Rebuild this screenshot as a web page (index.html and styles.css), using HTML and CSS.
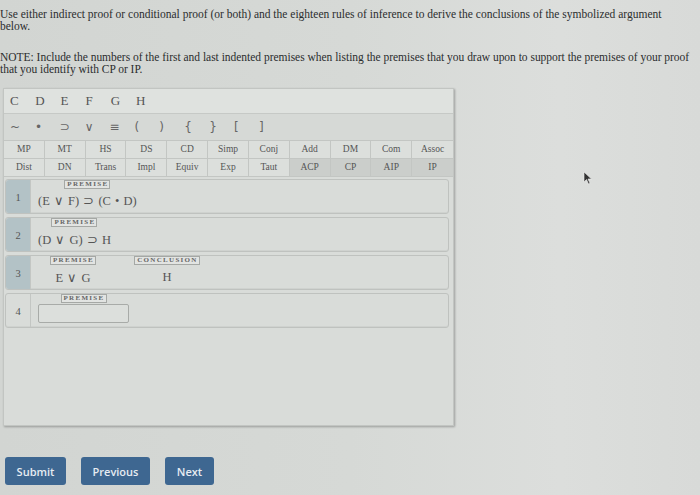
FILE: index.html
```html
<!DOCTYPE html>
<html>
<head>
<meta charset="utf-8">
<link rel="stylesheet" href="styles.css">
</head>
<body>
<div class="page">
  <p class="intro first">Use either indirect proof or conditional proof (or both) and the eighteen rules of inference to derive the conclusions of the symbolized argument below.</p>
  <p class="intro note">NOTE: Include the numbers of the first and last indented premises when listing the premises that you draw upon to support the premises of your proof that you identify with CP or IP.</p>

  <div class="panel">
    <div class="letters">
      <span>C</span><span>D</span><span>E</span><span>F</span><span>G</span><span>H</span>
    </div>
    <div class="symbols">
      <span>~</span><span>•</span><span>⊃</span><span>∨</span><span>≡</span><span>(</span><span>)</span><span>{</span><span>}</span><span>[</span><span>]</span>
    </div>
    <div class="rules">
      <div class="cell">MP</div><div class="cell">MT</div><div class="cell">HS</div><div class="cell">DS</div><div class="cell">CD</div><div class="cell">Simp</div><div class="cell">Conj</div><div class="cell">Add</div><div class="cell">DM</div><div class="cell">Com</div><div class="cell last">Assoc</div>
      <div class="cell">Dist</div><div class="cell">DN</div><div class="cell">Trans</div><div class="cell">Impl</div><div class="cell">Equiv</div><div class="cell">Exp</div><div class="cell">Taut</div><div class="cell dark">ACP</div><div class="cell dark">CP</div><div class="cell dark">AIP</div><div class="cell dark last">IP</div>
    </div>

    <div class="lines">
      <div class="line">
        <div class="num given">1</div>
        <div class="content">
          <div class="block"><span class="tag">PREMISE</span><span class="formula">(E ∨ F) ⊃ (C • D)</span></div>
        </div>
      </div>
      <div class="line">
        <div class="num given">2</div>
        <div class="content">
          <div class="block"><span class="tag">PREMISE</span><span class="formula">(D ∨ G) ⊃ H</span></div>
        </div>
      </div>
      <div class="line">
        <div class="num given">3</div>
        <div class="content">
          <div class="block"><span class="tag">PREMISE</span><span class="formula">E ∨ G</span></div>
          <div class="block concl"><span class="tag">CONCLUSION</span><span class="formula">H</span></div>
        </div>
      </div>
      <div class="line">
        <div class="num">4</div>
        <div class="content">
          <div class="block wide"><span class="tag">PREMISE</span><span class="input"></span></div>
        </div>
      </div>
    </div>
  </div>

  <div class="buttons">
    <button class="btn submit">Submit</button>
    <button class="btn prev">Previous</button>
    <button class="btn next">Next</button>
  </div>

  <svg class="cursor" width="10" height="14" viewBox="0 0 10 14"><path d="M1 1 L1 11 L3.5 8.5 L5.5 13 L7 12.3 L5 8 L8.5 8 Z" fill="#333" stroke="#eee" stroke-width="0.6"/></svg>
</div>
</body>
</html>
```

FILE: styles.css
```css
html, body {
  margin: 0;
  padding: 0;
}
body {
  background: linear-gradient(90deg, #d2d5d2 0%, #d6d9d6 50%, #dcdedc 80%, #d8dad8 100%);
  width: 700px;
  height: 495px;
  overflow: hidden;
}
.page {
  position: relative;
  width: 700px;
  height: 495px;
  font-family: "Liberation Serif", "Times New Roman", serif;
}
.intro {
  margin: 0;
  padding: 8px 0 0 0;
  font-size: 11.5px;
  line-height: 12px;
  color: #2b2d2e;
  width: 700px;
}
.intro.first {
  width: 672px;
}
.intro.note {
  padding-top: 19px;
  letter-spacing: -0.02px;
}
.panel {
  margin: 13px 0 0 3px;
  width: 449px;
  height: 336px;
  background: #d9dcd9;
  border: 1px solid #c2c5c2;
  box-shadow: 1px 1px 2px rgba(0,0,0,0.28);
  color: #555;
}
.letters {
  height: 24px;
  display: flex;
  align-items: center;
  padding-left: 6px;
  background: #dfe2df;
  border-bottom: 1px solid #c6c9c6;
  font-size: 13px;
}
.letters span {
  width: 25.2px;
  display: inline-block;
}
.symbols {
  height: 26px;
  display: flex;
  align-items: center;
  padding-left: 6px;
  background: #d6d9d6;
  border-bottom: 1px solid #c3c6c3;
  font-size: 12px;
  font-family: "DejaVu Sans", sans-serif;
  color: #666;
}
.symbols span {
  width: 24.9px;
  display: inline-block;
}
.rules {
  display: grid;
  grid-template-columns: repeat(11, 1fr);
  font-size: 9.5px;
  color: #555;
}
.cell {
  height: 17px;
  line-height: 17px;
  text-align: center;
  border-right: 1px solid #c3c6c3;
  border-bottom: 1px solid #c3c6c3;
  background: #dcdfdc;
}
.cell.last {
  border-right: none;
}
.cell.dark {
  background: #cbcecb;
}
.lines {
  padding: 2px 4px 0 1px;
  display: flex;
  flex-direction: column;
  gap: 3px;
}
.line {
  height: 33px;
  display: flex;
  border: 1px solid #bfc2bf;
  border-radius: 3px;
  background: #d9dcd9;
  box-shadow: inset 0 -1px 0 #cfd2cf;
}
.num {
  width: 25px;
  border-right: 1px solid #c3c6c3;
  display: flex;
  align-items: center;
  justify-content: center;
  font-size: 10.5px;
  color: #555;
  padding-top: 2px;
  box-sizing: border-box;
}
.num.given {
  background: #b3c2c6;
  border-radius: 3px 0 0 3px;
}
.content {
  display: flex;
  padding-left: 7px;
  gap: 24px;
}
.block {
  display: flex;
  flex-direction: column;
  align-items: center;
  min-width: 70px;
}
.block.wide {
  min-width: 0;
}
.tag {
  display: inline-block;
  font-size: 7px;
  line-height: 7px;
  letter-spacing: 1.3px;
  padding: 0 1px 0 2px;
  border: 1px solid #a5a8a5;
  background: #e2e4e2;
  color: #666;
  font-weight: bold;
}
.formula {
  font-size: 12.5px;
  color: #555;
  margin-top: 5px;
  white-space: nowrap;
  word-spacing: 1px;
}
.line:first-child .formula {
  margin-top: 4px;
}
.input {
  display: block;
  width: 89px;
  height: 17px;
  margin-top: 1px;
  border: 1px solid #a8aba8;
  border-radius: 2px;
  background: #dcdfdc;
}
.buttons {
  display: flex;
  gap: 15px;
  margin: 31px 0 0 5px;
}
.btn {
  height: 28px;
  border: none;
  border-radius: 3px;
  background: #3e6791;
  color: #e6ecf2;
  font-family: "Open Sans", sans-serif;
  font-weight: 600;
  font-size: 11px;
  padding: 0;
}
.submit { width: 61px; }
.prev { width: 69px; }
.next { width: 49px; }
.cursor {
  position: absolute;
  left: 583px;
  top: 171px;
}
```
